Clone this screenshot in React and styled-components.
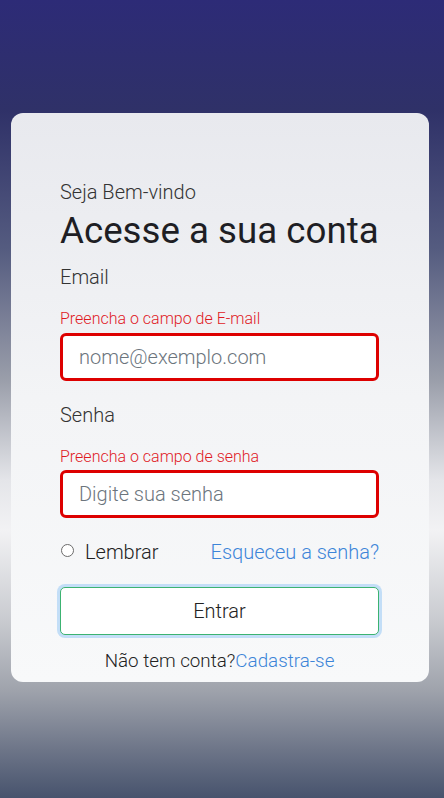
import styled, { createGlobalStyle } from 'styled-components'

const GlobalStyle = createGlobalStyle`
	html, body {
		margin: 0;
		padding: 0;
	}
	body {
		font-family: Roboto, 'Liberation Sans', sans-serif;
		color: #222;
	}
`

const Page = styled.div`
	min-height: 798px;
	box-sizing: border-box;
	padding: 113px 15px 0 11px;
	background: linear-gradient(
		180deg,
		#2d2b77 0px,
		#2f3168 110px,
		#555c80 250px,
		#9a9eaa 380px,
		#e4e5e9 480px,
		#f2f2f4 530px,
		#c9cbd0 620px,
		#9fa3ac 690px,
		#6d7588 750px,
		#47536d 798px
	);
`

const Card = styled.form`
	width: 418px;
	box-sizing: border-box;
	padding: 67px 50px 10px 49px;
	border-radius: 12px;
	background: linear-gradient(180deg, #e8e9ee 0%, #f3f4f6 50%, #f8f9fa 100%);
	display: flex;
	flex-direction: column;
`

const Greeting = styled.p`
	margin: 0;
	font-size: 20px;
	line-height: 24px;
	font-weight: 300;
	color: #333;
`

const Title = styled.h1`
	margin: 4px 0 0;
	font-size: 36.7px;
	line-height: 45px;
	font-weight: 400;
	color: #1e1e24;
	white-space: nowrap;
`

const Label = styled.label`
	margin-top: ${(p) => p.$top || 12}px;
	font-size: 20px;
	line-height: 24px;
	font-weight: 300;
	color: #333;
`

const ErrorText = styled.span`
	margin-top: ${(p) => p.$top || 20}px;
	font-size: 16px;
	line-height: 19px;
	font-weight: 300;
	color: #e0191f;
`

const Input = styled.input`
	margin-top: ${(p) => p.$top || 4}px;
	height: 48px;
	box-sizing: border-box;
	width: 100%;
	border: 3px solid #dd0000;
	border-radius: 6px;
	background: #fff;
	padding: 0 16px;
	font-family: Roboto, 'Liberation Sans', sans-serif;
	font-size: 20px;
	font-weight: 300;
	outline: none;
	&::placeholder {
		color: #6c757d;
	}
`

const Row = styled.div`
	margin-top: 22px;
	display: flex;
	justify-content: space-between;
	align-items: center;
	height: 24px;
`

const Remember = styled.label`
	display: flex;
	align-items: center;
	gap: 11px;
	font-size: 20px;
	font-weight: 300;
	color: #222;
`

const Radio = styled.span`
	width: 11px;
	height: 11px;
	margin-left: 1px;
	border: 1.5px solid #6b6b6b;
	border-radius: 50%;
	background: #fff;
	margin-top: -3px;
`

const Link = styled.a`
	color: #3d85d8;
	font-size: ${(p) => p.$size || 20}px;
	font-weight: 300;
	text-decoration: none;
`

const Button = styled.button`
	margin-top: 23px;
	height: 48px;
	width: 100%;
	border: 1px solid #3cb371;
	border-radius: 5px;
	background: #fff;
	box-shadow: 0 0 0 3px #c3def7;
	font-family: Roboto, 'Liberation Sans', sans-serif;
	font-size: 20px;
	font-weight: 300;
	color: #222;
`

const Footer = styled.p`
	margin: 15px 0 0;
	text-align: center;
	font-size: 18.8px;
	line-height: 22px;
	font-weight: 300;
	color: #222;
`

export default function App() {
	return (
		<>
			<GlobalStyle />
			<Page>
				<Card onSubmit={(e) => e.preventDefault()}>
					<Greeting>Seja Bem-vindo</Greeting>
					<Title>Acesse a sua conta</Title>
					<Label $top={12}>Email</Label>
					<ErrorText $top={20}>Preencha o campo de E-mail</ErrorText>
					<Input type='email' placeholder='nome@exemplo.com' $top={5} />
					<Label $top={22}>Senha</Label>
					<ErrorText $top={20}>Preencha o campo de senha</ErrorText>
					<Input type='password' placeholder='Digite sua senha' $top={4} />
					<Row>
						<Remember>
							<Radio />
							Lembrar
						</Remember>
						<Link href='#'>Esqueceu a senha?</Link>
					</Row>
					<Button type='submit'>Entrar</Button>
					<Footer>
						Não tem conta?<Link href='#' $size={18.8}>Cadastra-se</Link>
					</Footer>
				</Card>
			</Page>
		</>
	)
}
